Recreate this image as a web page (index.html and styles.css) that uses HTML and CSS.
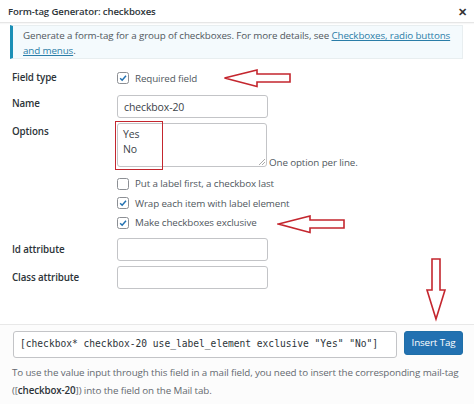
FILE: index.html
```html
<!DOCTYPE html>
<html>
<head>
<meta charset="utf-8">
<link rel="stylesheet" href="styles.css">
</head>
<body>
<div class="dialog">
  <div class="header">
    <span class="title">Form-tag Generator: checkboxes</span>
    <span class="close">✕</span>
  </div>
  <div class="notice">Generate a form-tag for a group of checkboxes. For more details, see <a href="#">Checkboxes, radio buttons and menus</a>.</div>

  <div class="form">
    <div class="label">Field type</div>
    <div class="control row-check first">
      <span class="cb checked"><svg viewBox="0 0 12 12"><path d="M2.6 6.2 L5 8.6 L9.6 3.4" /></svg></span>
      <span>Required field</span>
    </div>

    <div class="label">Name</div>
    <div class="control"><div class="input">checkbox-20</div></div>

    <div class="label">Options</div>
    <div class="control">
      <div class="opts">
        <div class="textarea">Yes<br>No<span class="grip"></span></div>
        <span class="note">One option per line.</span>
      </div>
      <div class="checks">
        <div class="row-check"><span class="cb"></span><span>Put a label first, a checkbox last</span></div>
        <div class="row-check"><span class="cb checked"><svg viewBox="0 0 12 12"><path d="M2.6 6.2 L5 8.6 L9.6 3.4" /></svg></span><span>Wrap each item with label element</span></div>
        <div class="row-check"><span class="cb checked"><svg viewBox="0 0 12 12"><path d="M2.6 6.2 L5 8.6 L9.6 3.4" /></svg></span><span>Make checkboxes exclusive</span></div>
      </div>
    </div>

    <div class="label low">Id attribute</div>
    <div class="control"><div class="input"></div></div>

    <div class="label low">Class attribute</div>
    <div class="control"><div class="input"></div></div>
  </div>

  <div class="footer">
    <div class="tagrow">
      <div class="tag">[checkbox* checkbox-20 use_label_element exclusive "Yes" "No"]</div>
      <button class="btn">Insert Tag</button>
    </div>
    <p class="hint">To use the value input through this field in a mail field, you need to insert the corresponding mail-tag ([<b>checkbox-20</b>]) into the field on the Mail tab.</p>
  </div>
</div>

<svg class="annot a1" width="70" height="20" viewBox="0 0 70 20"><polygon points="1.5,9 34,1 34,5 67,5 67,13 34,13 34,17.5" /></svg>
<svg class="annot a2" width="70" height="20" viewBox="0 0 70 20"><polygon points="1.5,9 33,1 33,5 67,5 67,13 33,13 33,17.5" /></svg>
<svg class="annot a3" width="22" height="64" viewBox="0 0 22 64"><polygon points="7,1 15,1 15,32 20,32 11,61 2,32 7,32" /></svg>
<div class="annot redbox"></div>
</body>
</html>
```

FILE: styles.css
```css
* { box-sizing: border-box; }
html, body { margin: 0; padding: 0; background: #fff; }
body {
  font-family: "Open Sans", "Noto Sans", sans-serif;
  font-size: 9.8px;
  letter-spacing: -0.12px;
  color: #3c434a;
  width: 474px;
  height: 407px;
  overflow: hidden;
  position: relative;
}
.dialog { width: 474px; }
.header {
  height: 23px;
  display: flex;
  align-items: center;
  justify-content: space-between;
  padding: 0 7px 0 8px;
  border-bottom: 1px solid #e6e6e6;
  box-shadow: 0 1px 1px rgba(0,0,0,0.03);
}
.title { font-weight: 600; color: #2c3338; font-size: 9.6px; }
.close { font-weight: 700; font-size: 11px; color: #333; }
.notice {
  margin: 2px 11px 0 10px;
  padding: 3px 10px 4px 10px;
  background: #f4fafd;
  border: 1px solid #e8eef0;
  border-left: 3px solid #1b8fb6;
  line-height: 14.5px;
  color: #50575e;
  height: 34px;
}
.notice a { color: #2a7da8; }
.form {
  display: grid;
  grid-template-columns: 105px 1fr;
  padding: 8px 0 0 12px;
  row-gap: 5px;
}
.label { font-weight: 600; color: #2c3338; padding-top: 2px; line-height: 14px; }
.label.low { padding-top: 5px; }
.control { min-width: 0; }
.row-check { display: flex; align-items: center; height: 19.5px; gap: 6px; color: #50575e; }
.first { height: 24px; margin-top: -1px; }
.label:first-child { padding-top: 4px; }
.cb {
  width: 12px; height: 12px;
  border: 1px solid #8c8f94;
  border-radius: 2.5px;
  background: #fff;
  display: inline-block;
  flex: none;
}
.cb svg { display: block; width: 10px; height: 10px; }
.cb path { fill: none; stroke: #2271b1; stroke-width: 1.8; }
.input {
  width: 151px; height: 23px;
  border: 1px solid #c3c4c7;
  border-radius: 3px;
  padding: 4px 6px;
  font-size: 10.5px;
  color: #3c434a;
  line-height: 14px;
}
.opts { display: flex; align-items: flex-end; }
.textarea {
  width: 150px; height: 44px;
  border: 1px solid #c3c4c7;
  border-radius: 3px;
  padding: 3px 5px;
  font-size: 10.5px;
  line-height: 15px;
  position: relative;
  color: #3c434a;
}
.grip {
  position: absolute; right: 1px; bottom: 1px;
  width: 6px; height: 6px;
  background: linear-gradient(135deg, transparent 45%, #aaa 45%, #aaa 55%, transparent 55%, transparent 70%, #aaa 70%, #aaa 80%, transparent 80%);
}
.note { margin-left: 2px; color: #50575e; line-height: 12px; margin-bottom: -2px; }
.checks { padding-top: 7px; }
.footer {
  margin-top: 35px;
  border-top: 1px solid #e8e8e8;
  background: #fcfcfc;
  padding: 6px 11px 0 13px;
  height: 80px;
}
.tagrow { display: flex; align-items: flex-start; gap: 7px; }
.tag {
  width: 384px; height: 27px;
  border: 1px solid #c3c4c7;
  border-radius: 3px;
  background: #fff;
  font-family: "DejaVu Sans Mono", "Liberation Mono", monospace;
  font-size: 9.6px;
  letter-spacing: 0;
  padding: 6px 6px;
  color: #2c3338;
  white-space: nowrap;
}
.btn {
  width: 59px; height: 24px;
  border: 1px solid #1f6fa8;
  border-radius: 3px;
  background: #2271b1;
  color: #fff;
  font-family: inherit;
  font-size: 9.8px;
  letter-spacing: -0.12px;
  padding: 0;
}
.hint { margin: 6px 0 0 -1px; line-height: 18px; color: #646970; }
.hint b { color: #2c3338; font-weight: 600; }
.annot { position: absolute; }
.annot polygon { fill: none; stroke: #c4262e; stroke-width: 1.6; stroke-linejoin: miter; }
.a1 { left: 223px; top: 69px; }
.a2 { left: 277px; top: 215px; }
.a3 { left: 425px; top: 258px; }
.redbox { left: 115px; top: 121px; width: 48px; height: 49px; border: 1.5px solid #c4262e; }
```
